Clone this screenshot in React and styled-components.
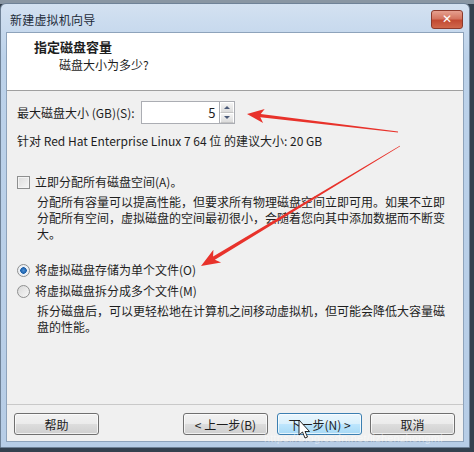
import React from 'react';
import styled, { createGlobalStyle } from 'styled-components';

const Global = createGlobalStyle`
  html, body { margin: 0; padding: 0; }
  body {
    background: #3f4b58;
    font-family: "Noto Sans CJK SC", "Noto Sans", sans-serif;
    font-size: 12px;
    color: #1e1e1e;
  }
`;

const Screen = styled.div`
  position: relative;
  width: 474px;
  height: 452px;
  overflow: hidden;
  background: linear-gradient(to bottom, #8996a3 0, #8996a3 4px, #34414f 4px);
`;

const Window = styled.div`
  margin-top: 3px;
  width: 470px;
  height: 445px;
  box-sizing: border-box;
  display: flex;
  flex-direction: column;
  background: linear-gradient(to bottom, #d3e1f1 0%, #bcd2ea 12%, #b7cde6 100%);
  border: 1px solid #6f8297;
  border-radius: 6px 6px 0 0;
  padding: 0 5px 5px 5px;
`;

const TitleBar = styled.div`
  height: 28px;
  display: flex;
  align-items: center;
  justify-content: space-between;
  padding-left: 4px;
`;

const TitleText = styled.span`
  font-size: 12px;
  color: #1d2a38;
  letter-spacing: 0.2px;
  margin-top: 2px;
`;

const CloseButton = styled.div`
  width: 30px;
  height: 17px;
  margin-top: 2px;
  margin-right: 1px;
  border: 1px solid #8c3a2c;
  border-radius: 3px;
  background: linear-gradient(to bottom, #e6a08f 0%, #d47560 45%, #c24a32 55%, #d0684c 100%);
  display: flex;
  align-items: center;
  justify-content: center;
  color: #fff;
  font-family: "DejaVu Sans", sans-serif;
  font-weight: bold;
  font-size: 12px;
  line-height: 1;
`;

const Client = styled.div`
  flex: 1;
  display: flex;
  flex-direction: column;
  background: #f0f0f0;
  border: 1px solid #8ea3bb;
`;

const Header = styled.div`
  height: 58px;
  background: #fff;
  border-bottom: 1px solid #a0a0a0;
  box-sizing: border-box;
  padding: 5px 0 0 27px;
`;

const HeaderTitle = styled.div`
  font-size: 13px;
  font-weight: bold;
  line-height: 18px;
`;

const HeaderSub = styled.div`
  padding-left: 25px;
  line-height: 18px;
`;

const Body = styled.div`
  flex: 1;
  padding: 10px 10px 0 10px;
  display: flex;
  flex-direction: column;
`;

const SizeRow = styled.div`
  display: flex;
  align-items: center;
  gap: 6px;
  height: 23px;
`;

const SpinBox = styled.div`
  display: flex;
  height: 23px;
`;

const NumberField = styled.div`
  width: 78px;
  box-sizing: border-box;
  border: 1px solid #abadb3;
  border-right: none;
  background: #fff;
  text-align: right;
  padding-right: 3px;
  font-size: 13px;
  line-height: 21px;
`;

const SpinButtons = styled.div`
  width: 16px;
  display: flex;
  flex-direction: column;
  border: 1px solid #abadb3;
  box-sizing: border-box;
`;

const SpinButton = styled.div`
  flex: 1;
  display: flex;
  align-items: center;
  justify-content: center;
  background: linear-gradient(to bottom, #f4f4f4, #dcdcdc);
  border: 1px solid #fff;
  border-bottom-color: #c4c4c4;
  &::after {
    content: '';
    border-left: 3px solid transparent;
    border-right: 3px solid transparent;
    ${p => (p.$up ? 'border-bottom: 3px solid #4b5a78;' : 'border-top: 3px solid #4b5a78;')}
  }
`;

const Line = styled.div`
  line-height: 18px;
  margin-top: ${p => p.$top || 0}px;
`;

const OptionRow = styled.div`
  display: flex;
  align-items: center;
  gap: 5px;
  line-height: 18px;
  margin-top: ${p => p.$top || 0}px;
`;

const CheckBox = styled.span`
  width: 11px;
  height: 11px;
  border: 1px solid #8e8f8f;
  background: linear-gradient(135deg, #dcdcdc, #f6f6f6);
  box-shadow: inset 0 0 0 1px #f4f4f4;
`;

const Radio = styled.span`
  width: 11px;
  height: 11px;
  border-radius: 50%;
  border: 1px solid #8e8f8f;
  background: ${p =>
    p.$checked
      ? 'radial-gradient(circle, #4a8fd6 0, #1b5ea8 3px, #e8eef5 3.5px, #f6f6f6 100%)'
      : 'linear-gradient(135deg, #d8d8d8, #f8f8f8)'};
`;

const Description = styled.div`
  padding-left: 20px;
  line-height: 16px;
  margin-top: 3px;
  white-space: nowrap;
`;

const Footer = styled.div`
  border-top: 1px solid #c9c9c9;
  height: 37px;
  display: flex;
  align-items: center;
  padding: 2px 8px 0 7px;
  box-sizing: border-box;
`;

const Button = styled.div`
  width: 85px;
  height: 22px;
  box-sizing: border-box;
  border: 1px solid ${p => (p.$focus ? '#3c7fb1' : '#707070')};
  border-radius: 3px;
  background: ${p =>
    p.$focus
      ? 'linear-gradient(to bottom, #eaf6fd 0%, #d9f0fc 50%, #bee6fd 51%, #a7d9f5 100%)'
      : 'linear-gradient(to bottom, #f2f2f2 0%, #ebebeb 50%, #dddddd 51%, #cfcfcf 100%)'};
  box-shadow: inset 0 0 0 1px rgba(255, 255, 255, 0.7);
  display: flex;
  align-items: center;
  justify-content: center;
  font-size: 12px;
  margin-left: ${p => p.$gap || 0}px;
`;

const Overlay = styled.svg`
  position: absolute;
  left: 0;
  top: 0;
  pointer-events: none;
`;

const Watermark = styled.div`
  position: absolute;
  left: 264px;
  top: 432px;
  font-family: "Liberation Sans", sans-serif;
  font-size: 11px;
  color: rgba(255, 255, 255, 0.45);
  letter-spacing: 0.2px;
  pointer-events: none;
`;

function arrowPoints(tx, ty, hx, hy, headLen, headHalf, tail, neck) {
  const dx = hx - tx;
  const dy = hy - ty;
  const len = Math.hypot(dx, dy);
  const ux = dx / len;
  const uy = dy / len;
  const nx = -uy;
  const ny = ux;
  const bx = hx - ux * headLen;
  const by = hy - uy * headLen;
  const nbx = hx - ux * headLen * 0.8;
  const nby = hy - uy * headLen * 0.8;
  const pts = [
    [tx + nx * tail, ty + ny * tail],
    [nbx + nx * neck, nby + ny * neck],
    [bx + nx * headHalf, by + ny * headHalf],
    [hx, hy],
    [bx - nx * headHalf, by - ny * headHalf],
    [nbx - nx * neck, nby - ny * neck],
    [tx - nx * tail, ty - ny * tail],
  ];
  return pts.map(p => p.map(v => v.toFixed(1)).join(',')).join(' ');
}

const App = () => (
  <>
    <Global />
    <Screen>
      <Window>
        <TitleBar>
          <TitleText>新建虚拟机向导</TitleText>
          <CloseButton>✕</CloseButton>
        </TitleBar>
        <Client>
          <Header>
            <HeaderTitle>指定磁盘容量</HeaderTitle>
            <HeaderSub>磁盘大小为多少?</HeaderSub>
          </Header>
          <Body>
            <SizeRow>
              <span>最大磁盘大小 (GB)(S):</span>
              <SpinBox>
                <NumberField>5</NumberField>
                <SpinButtons>
                  <SpinButton $up />
                  <SpinButton />
                </SpinButtons>
              </SpinBox>
            </SizeRow>
            <Line $top={8}>针对 Red Hat Enterprise Linux 7 64 位 的建议大小: 20 GB</Line>
            <OptionRow $top={23}>
              <CheckBox />
              <span>立即分配所有磁盘空间(A)。</span>
            </OptionRow>
            <Description>
              分配所有容量可以提高性能，但要求所有物理磁盘空间立即可用。如果不立即
              <br />
              分配所有空间，虚拟磁盘的空间最初很小，会随着您向其中添加数据而不断变
              <br />
              大。
            </Description>
            <OptionRow $top={19}>
              <Radio $checked />
              <span>将虚拟磁盘存储为单个文件(O)</span>
            </OptionRow>
            <OptionRow $top={3}>
              <Radio />
              <span>将虚拟磁盘拆分成多个文件(M)</span>
            </OptionRow>
            <Description>
              拆分磁盘后，可以更轻松地在计算机之间移动虚拟机，但可能会降低大容量磁
              <br />
              盘的性能。
            </Description>
          </Body>
          <Footer>
            <Button>帮助</Button>
            <Button $gap={84}>&lt; 上一步(B)</Button>
            <Button $gap={9} $focus>下一步(N) &gt;</Button>
            <Button $gap={8}>取消</Button>
          </Footer>
        </Client>
      </Window>
      <Watermark>https://blog.csdn.net/lizhenzhongmi</Watermark>
      <Overlay width="474" height="452" viewBox="0 0 474 452">
        <polygon points={arrowPoints(398, 132, 247, 114, 17, 7, 0.4, 1.6)} fill="#e8322b" />
        <polygon points={arrowPoints(400, 146, 201, 266, 19, 7.5, 0.4, 1.8)} fill="#e8322b" />
        <path
          d="M299 420 L299 435 L302.5 432 L305 438 L307.5 437 L305 431.5 L309.5 431.5 Z"
          fill="#fff"
          stroke="#111"
          strokeWidth="0.9"
          strokeLinejoin="round"
        />
      </Overlay>
    </Screen>
  </>
);

export default App;
